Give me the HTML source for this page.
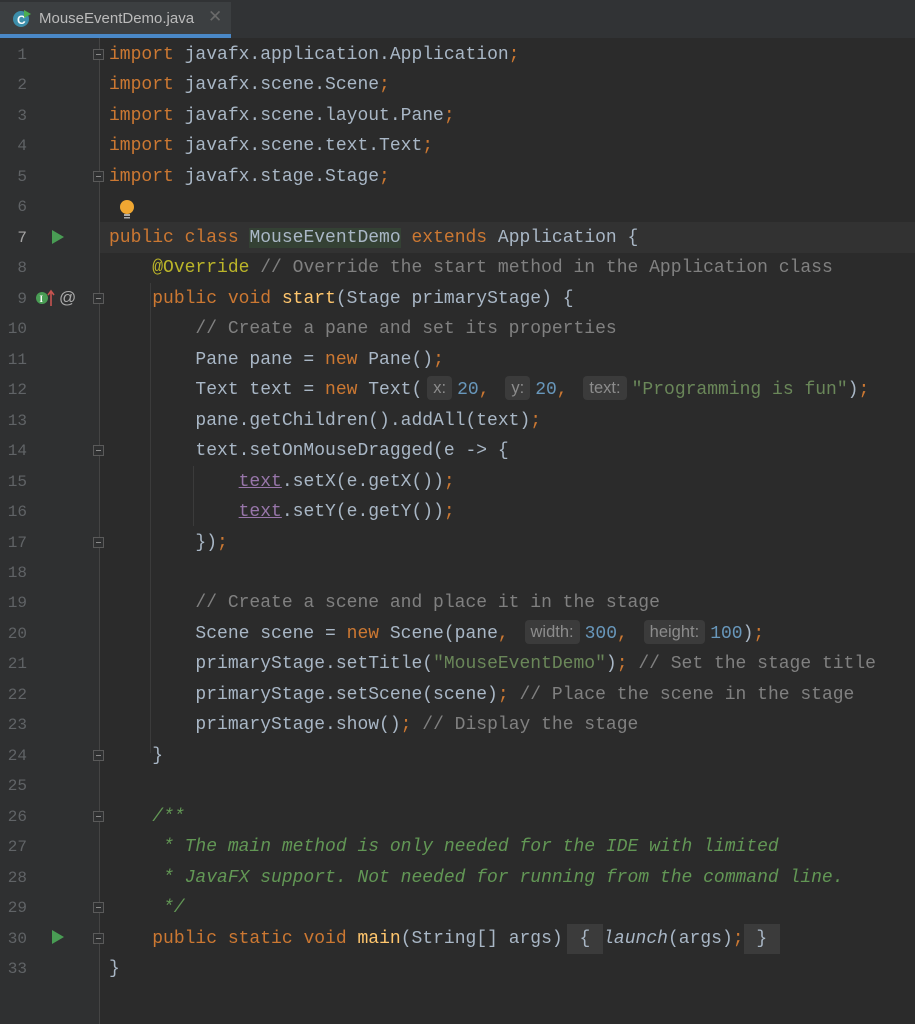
<!DOCTYPE html>
<html><head><meta charset="utf-8"><style>
html,body{margin:0;padding:0;width:915px;height:1024px;overflow:hidden;background:#2b2b2b}
#tabs{position:absolute;left:0;top:0;width:915px;height:38px;background:#313335}
#tab{position:absolute;left:0;top:2px;width:231px;height:32px;background:#3c3f41;font:15px "Liberation Sans",sans-serif;color:#bbbbbb}
#tabline{position:absolute;left:0;top:34px;width:231px;height:4px;background:#4a88c7}
#gutter{position:absolute;left:0;top:38px;width:100px;height:986px;background:#2f3031}
#gsep{position:absolute;left:99px;top:38px;width:1px;height:986px;background:#444}
.ln{position:absolute;left:0;width:27px;text-align:right;font:16px "Liberation Mono",monospace;color:#606366;height:30px;line-height:30px}
.c{position:absolute;left:109px;white-space:pre;font:18px "Liberation Mono",monospace;color:#a9b7c6;height:30px;line-height:30px}
.k{color:#cc7832}.s{color:#6a8759}.n{color:#6897bb}.cm{color:#808080}.a{color:#bbb529}.m{color:#ffc66d}
.d{color:#629755;font-style:italic}.f{color:#9876aa;text-decoration:underline}
.h{display:inline-block;background:#3b3b3b;color:#8c8c8c;font:16.5px "Liberation Sans",sans-serif;border-radius:4px;padding:0 6px;line-height:24px;margin:0 5px 0 5px;vertical-align:1px}
.fold{position:absolute;left:93px;width:11px;height:11px;border:1px solid #5a5a5a;background:#2f3031;box-sizing:border-box}
.fold:after{content:"";position:absolute;left:2px;top:4px;width:5px;height:1px;background:#8a8a8a}
.ig{position:absolute;width:1px;background:#3b3b3b}
.bx{background:#3b3b3b;display:inline-block;padding:0 2px}
</style></head><body>
<div id="tabs"><div id="tab">
<svg style="position:absolute;left:12px;top:7px" width="20" height="20"><circle cx="9" cy="10" r="8" fill="#3d8eaa"/><text x="5" y="15" font-family="Liberation Sans" font-weight="bold" font-size="12" fill="#fff">C</text><path d="M12 1 L19 5 L12 9Z" fill="#4caf50"/></svg>
<span style="position:absolute;left:39px;top:8px">MouseEventDemo.java</span>
<span style="position:absolute;left:208px;top:5px;color:#6a6a6a;font-size:17px">✕</span>
</div><div id="tabline"></div></div>
<div id="gutter"></div><div id="gsep"></div>
<div style="position:absolute;left:100px;top:222px;width:815px;height:31px;background:#323232"></div>
<div class="ig" style="left:150px;top:283px;height:470px"></div>
<div class="ig" style="left:193px;top:466px;height:60px"></div>
<div id="code"></div>
<svg style="position:absolute;left:118px;top:199px" width="18" height="22"><circle cx="9" cy="8" r="7" fill="#f0a732"/><rect x="6" y="15" width="6" height="2" fill="#aaa"/><rect x="6" y="18" width="6" height="1.5" fill="#aaa"/></svg>
<svg style="position:absolute;left:50px;top:229px" width="16" height="16"><path d="M2 1 L14 8 L2 15Z" fill="#499c54"/></svg>
<svg style="position:absolute;left:50px;top:929px" width="16" height="16"><path d="M2 1 L14 8 L2 15Z" fill="#499c54"/></svg>
<svg style="position:absolute;left:35px;top:288px" width="45" height="20"><circle cx="7" cy="10" r="6" fill="#499c54"/><text x="4.5" y="14" font-size="9" font-family="Liberation Serif" font-weight="bold" fill="#fff">I</text><path d="M16 18 V4 M13 7 L16 3 L19 7" stroke="#c75450" stroke-width="1.6" fill="none"/><text x="24" y="15" font-size="17" font-family="Liberation Sans" fill="#aaa">@</text></svg>
<script>
const L=[
['1','<span class="k">import</span> javafx.application.Application<span class="k">;</span>'],
['2','<span class="k">import</span> javafx.scene.Scene<span class="k">;</span>'],
['3','<span class="k">import</span> javafx.scene.layout.Pane<span class="k">;</span>'],
['4','<span class="k">import</span> javafx.scene.text.Text<span class="k">;</span>'],
['5','<span class="k">import</span> javafx.stage.Stage<span class="k">;</span>'],
['6',''],
['7','<span class="k">public class</span> <span style="background:#344134">MouseEventDemo</span> <span class="k">extends</span> Application {'],
['8','    <span class="a">@Override</span> <span class="cm">// Override the start method in the Application class</span>'],
['9','    <span class="k">public void</span> <span class="m">start</span>(Stage primaryStage) {'],
['10','        <span class="cm">// Create a pane and set its properties</span>'],
['11','        Pane pane = <span class="k">new</span> Pane()<span class="k">;</span>'],
['12','        Text text = <span class="k">new</span> Text(<span class="h">x:</span><span class="n">20</span><span class="k">,</span> <span class="h">y:</span><span class="n">20</span><span class="k">,</span> <span class="h">text:</span><span class="s">"Programming is fun"</span>)<span class="k">;</span>'],
['13','        pane.getChildren().addAll(text)<span class="k">;</span>'],
['14','        text.setOnMouseDragged(e -&gt; {'],
['15','            <span class="f">text</span>.setX(e.getX())<span class="k">;</span>'],
['16','            <span class="f">text</span>.setY(e.getY())<span class="k">;</span>'],
['17','        })<span class="k">;</span>'],
['18',''],
['19','        <span class="cm">// Create a scene and place it in the stage</span>'],
['20','        Scene scene = <span class="k">new</span> Scene(pane<span class="k">,</span> <span class="h">width:</span><span class="n">300</span><span class="k">,</span> <span class="h">height:</span><span class="n">100</span>)<span class="k">;</span>'],
['21','        primaryStage.setTitle(<span class="s">"MouseEventDemo"</span>)<span class="k">;</span> <span class="cm">// Set the stage title</span>'],
['22','        primaryStage.setScene(scene)<span class="k">;</span> <span class="cm">// Place the scene in the stage</span>'],
['23','        primaryStage.show()<span class="k">;</span> <span class="cm">// Display the stage</span>'],
['24','    }'],
['25',''],
['26','    <span class="d">/**</span>'],
['27','<span class="d">     * The main method is only needed for the IDE with limited</span>'],
['28','<span class="d">     * JavaFX support. Not needed for running from the command line.</span>'],
['29','<span class="d">     */</span>'],
['30','    <span class="k">public static void</span> <span class="m">main</span>(String[] args)<span style="display:inline-block;width:4px"></span><span class="bx"> { </span><i>launch</i>(args)<span class="k">;</span><span class="bx"> } </span>'],
['33','}']];
let h='';const lh=30.47;
L.forEach((l,i)=>{const t=40+i*lh;
h+=`<div class="ln" style="top:${t}px;${l[0]=='7'?'color:#a4a3a3':''}">${l[0]}</div><div class="c" style="top:${t}px">${l[1]}</div>`;});
[0,4,8,13,16,23,25,28,29].forEach(i=>{h+=`<div class="fold" style="top:${40+i*lh+9}px"></div>`});
document.getElementById('code').innerHTML=h;
</script>
</body></html>
